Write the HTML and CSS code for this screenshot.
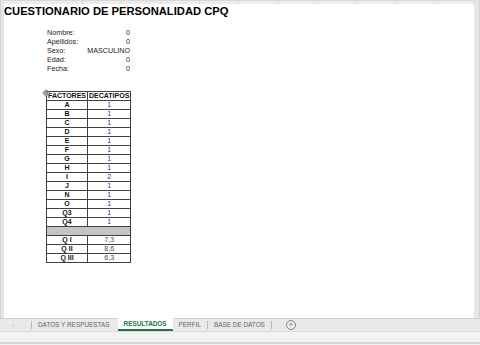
FILE: index.html
```html
<!DOCTYPE html>
<html lang="es">
<head>
	<meta charset="UTF-8">
	<title>Cuestionario CPQ</title>
	<link rel="stylesheet" href="styles.css">
</head>
<body>
	<div class="window">
		<div class="sheet">
			<div class="col-strip"><span></span><span></span><span></span><span></span><span></span><span></span><span></span><span></span><span></span><span></span><span></span></div>
			<div class="sheet-body">
				<h1>CUESTIONARIO DE PERSONALIDAD CPQ</h1>
				<div class="info">
					<div class="info-row"><span>Nombre:</span><span>0</span></div>
					<div class="info-row"><span>Apellidos:</span><span>0</span></div>
					<div class="info-row"><span>Sexo:</span><span>MASCULINO</span></div>
					<div class="info-row"><span>Edad:</span><span>0</span></div>
					<div class="info-row"><span>Fecha:</span><span>0</span></div>
				</div>
				<div class="table-wrap">
					<svg class="move-cursor" width="8" height="8" viewBox="0 0 8 8">
						<path d="M4 0.5 L5.5 2 H4.6 V3.4 H6 V2.5 L7.5 4 L6 5.5 V4.6 H4.6 V6 H5.5 L4 7.5 L2.5 6 H3.4 V4.6 H2 V5.5 L0.5 4 L2 2.5 V3.4 H3.4 V2 H2.5 Z" fill="#fff" stroke="#444" stroke-width="0.6" />
					</svg>
					<table class="results">
						<thead>
							<tr><th>FACTORES</th><th>DECATIPOS</th></tr>
						</thead>
						<tbody id="results-body"></tbody>
					</table>
				</div>
			</div>
		</div>
		<div class="tabs">
			<span class="tab-arrow">›</span>
			<span class="tab-sep"></span>
			<span class="tab">DATOS Y RESPUESTAS</span>
			<span class="tab active">RESULTADOS</span>
			<span class="tab">PERFIL</span>
			<span class="tab-sep"></span>
			<span class="tab">BASE DE DATOS</span>
			<span class="tab-sep"></span>
			<span class="tab-add">+</span>
		</div>
		<div class="status"></div>
	</div>

	<script>
		const factors = [
			['A', '1'], ['B', '1'], ['C', '1'], ['D', '1'], ['E', '1'], ['F', '1'], ['G', '1'],
			['H', '1'], ['I', '2'], ['J', '1'], ['N', '1'], ['O', '1'], ['Q3', '1'], ['Q4', '1']
		];
		const secondOrder = [['Q I', '7,3'], ['Q II', '8,6'], ['Q III', '6,3']];

		const body = document.getElementById('results-body');
		factors.forEach(f => {
			const row = document.createElement('tr');
			row.innerHTML = `<td class="factor">${f[0]}</td><td class="value">${f[1]}</td>`;
			body.appendChild(row);
		});
		const gap = document.createElement('tr');
		gap.className = 'gap-row';
		gap.innerHTML = '<td colspan="2"></td>';
		body.appendChild(gap);
		secondOrder.forEach(f => {
			const row = document.createElement('tr');
			row.innerHTML = `<td class="factor">${f[0]}</td><td class="value soft">${f[1]}</td>`;
			body.appendChild(row);
		});
	</script>
</body>
</html>
```

FILE: styles.css
```css
body {
	font-family: "Liberation Sans", Arial, sans-serif;
	margin: 0;
	padding: 0;
	background-color: #ffffff;
}

.window {
	width: 480px;
	height: 345px;
	display: flex;
	flex-direction: column;
	overflow: hidden;
	background: #f1f1f1;
}

.sheet {
	flex: 1;
	display: flex;
	flex-direction: column;
	background: #ffffff;
	border-left: 3px solid #e6e6e6;
	border-right: 5px solid #e6e6e6;
	margin-left: 1px;
	margin-right: 1px;
	box-shadow: -1px 0 0 #d4d4d4, 1px 0 0 #d4d4d4;
}

.col-strip {
	height: 3px;
	display: flex;
	background: #ececec;
	border-top: 1px solid #d8d8d8;
	padding-left: 40px;
}

.col-strip span {
	width: 42px;
	border-right: 1px solid #dadada;
}

.sheet-body {
	flex: 1;
}

h1 {
	margin: 0;
	font-size: 11.2px;
	font-weight: bold;
	color: #000;
	line-height: 14px;
}

.info {
	width: 83px;
	margin: 10px 0 0 43px;
	font-size: 7.2px;
	color: #222;
}

.info-row {
	display: flex;
	justify-content: space-between;
	height: 9px;
	line-height: 9px;
}

.table-wrap {
	position: relative;
	margin: 18px 0 0 42px;
	width: 85px;
}

.move-cursor {
	position: absolute;
	left: -4px;
	top: -2px;
}

.results {
	border-collapse: collapse;
	font-size: 7px;
}

.results th,
.results td {
	border: 1px solid #404040;
	height: 8px;
	padding: 0;
	line-height: 8px;
	text-align: center;
}

.results th {
	font-weight: bold;
	color: #111;
	padding: 0 1px;
}

.results th:first-child,
.results td.factor {
	width: 41px;
}

.results th:last-child,
.results td.value {
	width: 41px;
}

.results td.factor {
	font-weight: bold;
	color: #111;
}

.results td.value {
	color: #1f3b78;
}

.results td.soft {
	color: #3a4a6a;
}

.results .gap-row td {
	background: #c4c4c4;
	height: 8px;
}

.tabs {
	height: 12px;
	display: flex;
	align-items: center;
	background: #e9e9e9;
	border-top: 1px solid #d2d2d2;
	font-size: 6.4px;
	color: #666;
	padding-left: 12px;
}

.tab-arrow {
	color: #bbb;
	font-size: 7px;
	width: 19px;
}

.tab-sep {
	width: 1px;
	height: 8px;
	background: #b9b9b9;
}

.tab {
	padding: 0 6px;
	line-height: 12px;
	height: 12px;
	white-space: nowrap;
}

.tab.active {
	background: #ffffff;
	color: #217346;
	font-weight: bold;
	border-bottom: 2px solid #217346;
	height: 11px;
	line-height: 11px;
	margin-top: -1px;
	margin-left: 2px;
}

.tab-add {
	margin-left: 14px;
	width: 8px;
	height: 8px;
	border: 1px solid #888;
	border-radius: 50%;
	font-size: 8px;
	line-height: 8px;
	text-align: center;
	color: #777;
}

.status {
	height: 10px;
	background: #f3f3f3;
	border-top: 1px solid #dcdcdc;
	border-bottom: 2px solid #d6d6d6;
	margin-bottom: 1px;
}
```
